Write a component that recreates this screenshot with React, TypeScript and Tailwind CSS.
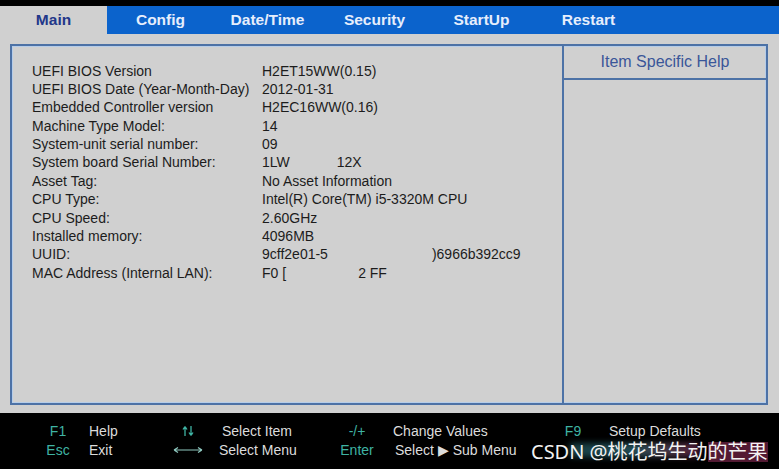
import React from 'react';

const tabs = ['Main', 'Config', 'Date/Time', 'Security', 'StartUp', 'Restart'];

const rows: { label: string; value: React.ReactNode }[] = [
  { label: 'UEFI BIOS Version', value: 'H2ET15WW(0.15)' },
  { label: 'UEFI BIOS Date (Year-Month-Day)', value: '2012-01-31' },
  { label: 'Embedded Controller version', value: 'H2EC16WW(0.16)' },
  { label: 'Machine Type Model:', value: '14' },
  { label: 'System-unit serial number:', value: '09' },
  {
    label: 'System board Serial Number:',
    value: (
      <>
        1LW<span className="ml-[47px]">12X</span>
      </>
    ),
  },
  { label: 'Asset Tag:', value: 'No Asset Information' },
  { label: 'CPU Type:', value: 'Intel(R) Core(TM) i5-3320M CPU' },
  { label: 'CPU Speed:', value: '2.60GHz' },
  { label: 'Installed memory:', value: '4096MB' },
  {
    label: 'UUID:',
    value: (
      <>
        9cff2e01-5<span className="ml-[104px]">)6966b392cc9</span>
      </>
    ),
  },
  {
    label: 'MAC Address (Internal LAN):',
    value: (
      <>
        F0 [<span className="ml-[72px]">2 FF</span>
      </>
    ),
  },
];

const LongArrow = () => (
  <svg width="30" height="8" viewBox="0 0 30 8" className="inline-block">
    <path d="M1 4H29M1 4L5 1.5M1 4L5 6.5M29 4L25 1.5M29 4L25 6.5" stroke="#8fc9c0" strokeWidth="1.2" fill="none" />
  </svg>
);

const UpDown = () => (
  <svg width="12" height="12" viewBox="0 0 12 12" className="inline-block">
    <path d="M3 11V2M3 1.5L1 4.5M3 1.5L5 4.5M9 1V10M9 10.5L7 7.5M9 10.5L11 7.5" stroke="#3fb3a3" strokeWidth="1.3" fill="none" />
  </svg>
);

const App: React.FC = () => {
  return (
    <div
      className="w-[779px] h-[469px] flex flex-col bg-[#d0d0d0] overflow-hidden relative"
      style={{ fontFamily: '"Liberation Sans", Arial, sans-serif' }}
    >
      {/* top strip */}
      <div className="h-[6px] bg-black" />

      {/* Tabs */}
      <div className="h-[28px] flex bg-[#0b63cc] pr-[3px]">
        {tabs.map((t, i) => (
          <div
            key={t}
            className={`w-[107px] flex items-center justify-center text-[15.5px] font-bold ${
              i === 0 ? 'bg-[#d0d0d0] text-[#22378a]' : 'text-[#e6eefc]'
            }`}
          >
            {t}
          </div>
        ))}
      </div>

      {/* Body */}
      <div className="flex-1 pt-[10px] pl-[10px] pr-[11px] pb-[8px]">
        <div className="h-full flex border-2 border-[#4d72a6] shadow-[inset_0_0_0_1px_#b6cde9]">
          <div className="flex-1 pt-[16px] pl-[20px] text-[14px] text-[#1c1c1c]">
            {rows.map((r) => (
              <div key={r.label} className="flex h-[18.36px] items-center">
                <div className="w-[230px] whitespace-nowrap">{r.label}</div>
                <div className="whitespace-nowrap">{r.value}</div>
              </div>
            ))}
          </div>
          <div className="w-[204px] flex flex-col border-l-2 border-[#4d72a6]">
            <div className="h-[34px] flex items-center justify-center border-b-2 border-[#4d72a6] text-[16px] text-[#3a5699]">
              Item Specific Help
            </div>
            <div className="flex-1" />
          </div>
        </div>
      </div>

      {/* Footer */}
      <div className="h-[56px] bg-black pt-[8px] text-[14px] leading-[16px] text-[#dcdcdc]">
        <div className="flex h-[19px] items-center">
          <div className="w-[76px] pl-[40px] text-center text-[#3fb3a3]">F1</div>
          <div className="w-[84px] pl-[13px]">Help</div>
          <div className="w-[56px] flex items-center justify-center">
            <UpDown />
          </div>
          <div className="w-[114px] pl-[6px]">Select Item</div>
          <div className="w-[54px] text-center text-[#3fb3a3]">-/+</div>
          <div className="w-[171px] pl-[9px]">Change Values</div>
          <div className="w-[36px] text-center text-[#3fb3a3]">F9</div>
          <div className="pl-[18px]">Setup Defaults</div>
        </div>
        <div className="flex h-[19px] items-center">
          <div className="w-[76px] pl-[40px] text-center text-[#3fb3a3]">Esc</div>
          <div className="w-[84px] pl-[13px]">Exit</div>
          <div className="w-[56px] flex items-center justify-center">
            <LongArrow />
          </div>
          <div className="w-[114px] pl-[3px]">Select Menu</div>
          <div className="w-[54px] text-center text-[#3fb3a3]">Enter</div>
          <div className="w-[171px] pl-[11px] whitespace-nowrap">Select ▶ Sub Menu</div>
          <div className="ml-[14px] w-[130px] h-[14px] rounded-sm bg-gradient-to-r from-[#1d4f55] via-[#2b5f6a] to-[#6a2448] blur-[3px] opacity-80" />
        </div>
      </div>

      {/* watermark */}
      <div
        className="absolute left-[531px] top-[442px] flex text-[20px] leading-[20px] text-[#f2f2f2] whitespace-pre"
        style={{ fontFamily: '"Noto Sans", "Noto Sans CJK SC", sans-serif' }}
      >
        <span>CSDN @桃花坞生动</span>
        <span className="bg-[#8a2c55]/60">的芒果</span>
      </div>
    </div>
  );
};

export default App;
